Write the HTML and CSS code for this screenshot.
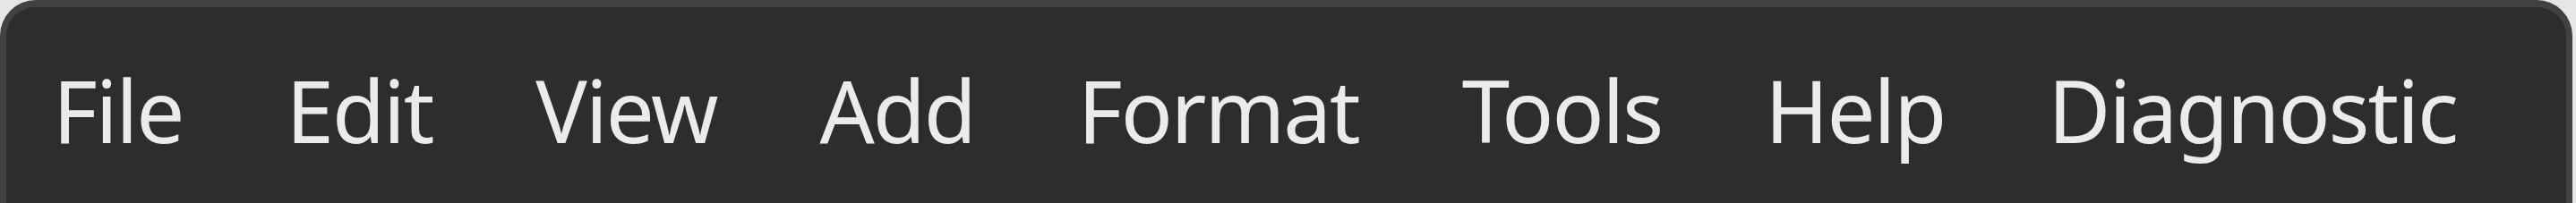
FILE: index.html
```html
<!DOCTYPE html>
<html lang="en">
<head>
    <meta charset="UTF-8">
    <title>Menu Bar</title>
    <link rel="stylesheet" href="styles.css">
</head>
<body>
    <div class="menu-bar">
        <nav class="menu">
            <span class="menu-item">File</span>
            <span class="menu-item">Edit</span>
            <span class="menu-item">View</span>
            <span class="menu-item">Add</span>
            <span class="menu-item">Format</span>
            <span class="menu-item">Tools</span>
            <span class="menu-item">Help</span>
            <span class="menu-item">Diagnostic</span>
        </nav>
    </div>
</body>
</html>
```

FILE: styles.css
```css
body {
    margin: 0;
    background-color: #e6e6e6;
    overflow: hidden;
}

.menu-bar {
    width: 2859px;
    height: 260px;
    background-color: #2d2d2f;
    border: 7px solid #414141;
    border-top-width: 8px;
    border-bottom: none;
    border-radius: 40px 40px 0 0;
}

.menu {
    display: flex;
    padding-top: 67px;
    padding-left: 52px;
}

.menu-item {
    font-family: "Noto Sans", "Open Sans", sans-serif;
    font-size: 96px;
    line-height: 1;
    letter-spacing: -2px;
    color: #ebebeb;
    padding-right: 115px;
}
```
